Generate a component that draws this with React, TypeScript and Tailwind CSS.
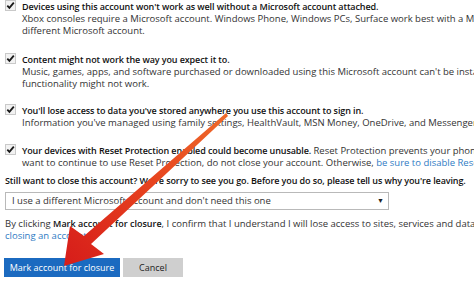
import React from "react";

const Check = () => (
  <svg width="11" height="11" viewBox="0 0 11 11" className="shrink-0">
    <rect x="0.5" y="0.5" width="10" height="10" fill="#f2f2f2" stroke="#c9c9c9" />
    <path d="M2.3 5.6 L4.4 7.8 L8.8 2.6" fill="none" stroke="#1a1a1a" strokeWidth="1.8" />
  </svg>
);

const Item = ({ title, children }: { title: React.ReactNode; children: React.ReactNode }) => (
  <div className="flex gap-[6px] pl-[5px]">
    <div className="-mt-[1px]">
      <Check />
    </div>
    <div className="flex flex-col">
      <div className="h-[12px] leading-[12px] whitespace-nowrap font-semibold text-[9px] tracking-[-0.1px] text-[#111]">{title}</div>
      {children}
    </div>
  </div>
);

const L = ({ children }: { children: React.ReactNode }) => (
  <div className="h-[12px] leading-[12px] whitespace-nowrap text-[#333]">{children}</div>
);

export default function App() {
  return (
    <div
      className="relative w-[474px] h-[286px] overflow-hidden bg-white text-[9.5px]"
      style={{ fontFamily: '"Open Sans", "Noto Sans", sans-serif' }}
    >
      <div className="flex flex-col pt-[1px]">
        <Item title="Devices using this account won't work as well without a Microsoft account attached.">
          <L>Xbox consoles require a Microsoft account. Windows Phone, Windows PCs, Surface work best with a Microsoft account attached and may need to be reset to use a</L>
          <L>different Microsoft account.</L>
        </Item>
        <div className="h-[17px]" />
        <Item title="Content might not work the way you expect it to.">
          <L>Music, games, apps, and software purchased or downloaded using this Microsoft account can't be installed again, and some</L>
          <L>functionality might not work.</L>
        </Item>
        <div className="h-[15px]" />
        <Item title="You'll lose access to data you've stored anywhere you use this account to sign in.">
          <L>Information you've managed using family settings, HealthVault, MSN Money, OneDrive, and Messenger contacts and more will be deleted.</L>
        </Item>
        <div className="h-[16px]" />
        <Item
          title={
            <>
              Your devices with Reset Protection enabled could become unusable.{" "}
              <span className="font-normal text-[9.5px] tracking-normal text-[#333]">Reset Protection prevents your phone from being used by others if it's lost or stolen. If you</span>
            </>
          }
        >
          <L>
            want to continue to use Reset Protection, do not close your account. Otherwise,{" "}
            <span className="text-[#2f7bc4]">be sure to disable Reset Protection before closing your account.</span>
          </L>
        </Item>
        <div className="h-[6px]" />
        <div className="pl-[5px] h-[12px] leading-[12px] whitespace-nowrap font-semibold text-[9px] tracking-[-0.1px] text-[#111]">
          Still want to close this account? We're sorry to see you go. Before you do so, please tell us why you're leaving.
        </div>
        <div className="h-[5px]" />
        <div className="ml-[5px] w-[384px] h-[18px] border border-[#b9b9b9] flex items-center justify-between pl-[6px] pr-[4px] text-[#333]">
          <span className="whitespace-nowrap">I use a different Microsoft account and don't need this one</span>
          <span className="text-[7px] text-[#222]">▼</span>
        </div>
        <div className="h-[8px]" />
        <div className="pl-[5px] h-[12px] leading-[12px] whitespace-nowrap text-[#333]">
          By clicking <span className="font-semibold text-[9px] text-[#111]">Mark account for closure</span>, I confirm that I understand I will lose access to sites, services and data associated with this account.
        </div>
        <div className="pl-[5px] h-[12px] leading-[12px] whitespace-nowrap text-[#2f7bc4]">closing an account</div>
        <div className="h-[16px]" />
        <div className="flex gap-[3px] pl-[4px] text-[9px]">
          <div className="w-[116px] h-[19px] bg-[#1b6ac0] text-white flex items-center justify-center">Mark account for closure</div>
          <div className="w-[60px] h-[19px] bg-[#cfcfcf] text-[#222] flex items-center justify-center">Cancel</div>
        </div>
      </div>
      <svg className="absolute inset-0 pointer-events-none" width="474" height="286" viewBox="0 0 474 286">
        <defs>
          <linearGradient id="ag" x1="228" y1="114" x2="64" y2="266" gradientUnits="userSpaceOnUse">
            <stop offset="0" stopColor="#ee6a2a" />
            <stop offset="0.5" stopColor="#e6401e" />
            <stop offset="1" stopColor="#d61c1a" />
          </linearGradient>
        </defs>
        <polygon
          points="226,113 228,116 91,244 104,254 64,266 70,226 84,236"
          fill="url(#ag)"
        />
      </svg>
    </div>
  );
}
